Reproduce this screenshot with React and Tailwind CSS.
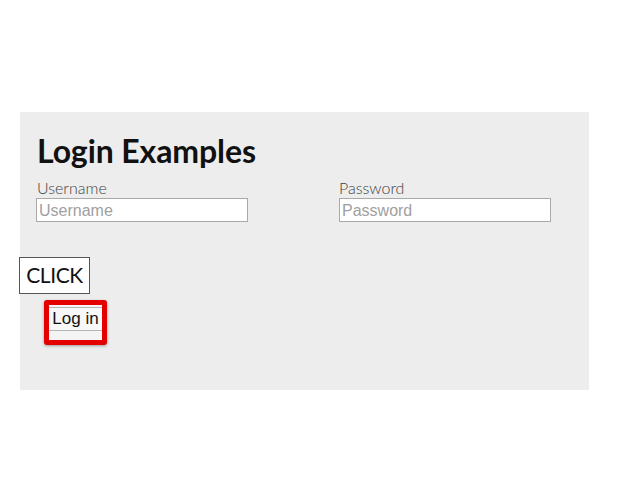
export default function App() {
  return (
    <div className="w-[638px] h-[478px] bg-white pt-[112px] pl-[20px]">
      <div className="w-[569px] h-[278px] bg-[#ededed] pt-[20px] pl-[17px] font-['Lato',sans-serif]">
        <h1 className="text-[32px] leading-[1.2] font-bold text-[#111] tracking-[-0.1px]">Login Examples</h1>
        <div className="mt-[8px] flex">
          <div className="w-[302px]">
            <div className="text-[16px] leading-[1.2] font-light text-[#3f3f3f]">Username</div>
            <input
              placeholder="Username"
              className="block -ml-px w-[212px] h-[24px] bg-white border border-[#a9a9a9] px-[2px] pt-[2px] text-[16px] font-['Liberation_Sans',sans-serif] placeholder:text-[#a0a0a0] outline-none"
            />
          </div>
          <div>
            <div className="text-[16px] leading-[1.2] font-light text-[#3f3f3f]">Password</div>
            <input
              type="password"
              placeholder="Password"
              className="block w-[212px] h-[24px] bg-white border border-[#a9a9a9] px-[2px] pt-[2px] text-[16px] font-['Liberation_Sans',sans-serif] placeholder:text-[#a0a0a0] outline-none"
            />
          </div>
        </div>
        <div className="mt-[35px] -ml-[18px] w-[71px] h-[37px] bg-white border border-[#555] flex items-center justify-center text-[21px] tracking-[-0.4px] text-[#111]">
          CLICK
        </div>
        <div className="mt-[6px] ml-[7px] w-[63px] h-[45px] border-[5px] border-[#e50000] rounded-[3px] shadow-[0_1px_3px_rgba(0,0,0,0.35)] bg-[#f4f4f4]">
          <button className="block w-full h-[24px] mt-[2px] border-y border-[#b5b5b5] bg-[#f8f8f8] text-[17px] leading-none text-[#111] font-['Liberation_Sans',sans-serif]">
            Log in
          </button>
        </div>
      </div>
    </div>
  );
}
